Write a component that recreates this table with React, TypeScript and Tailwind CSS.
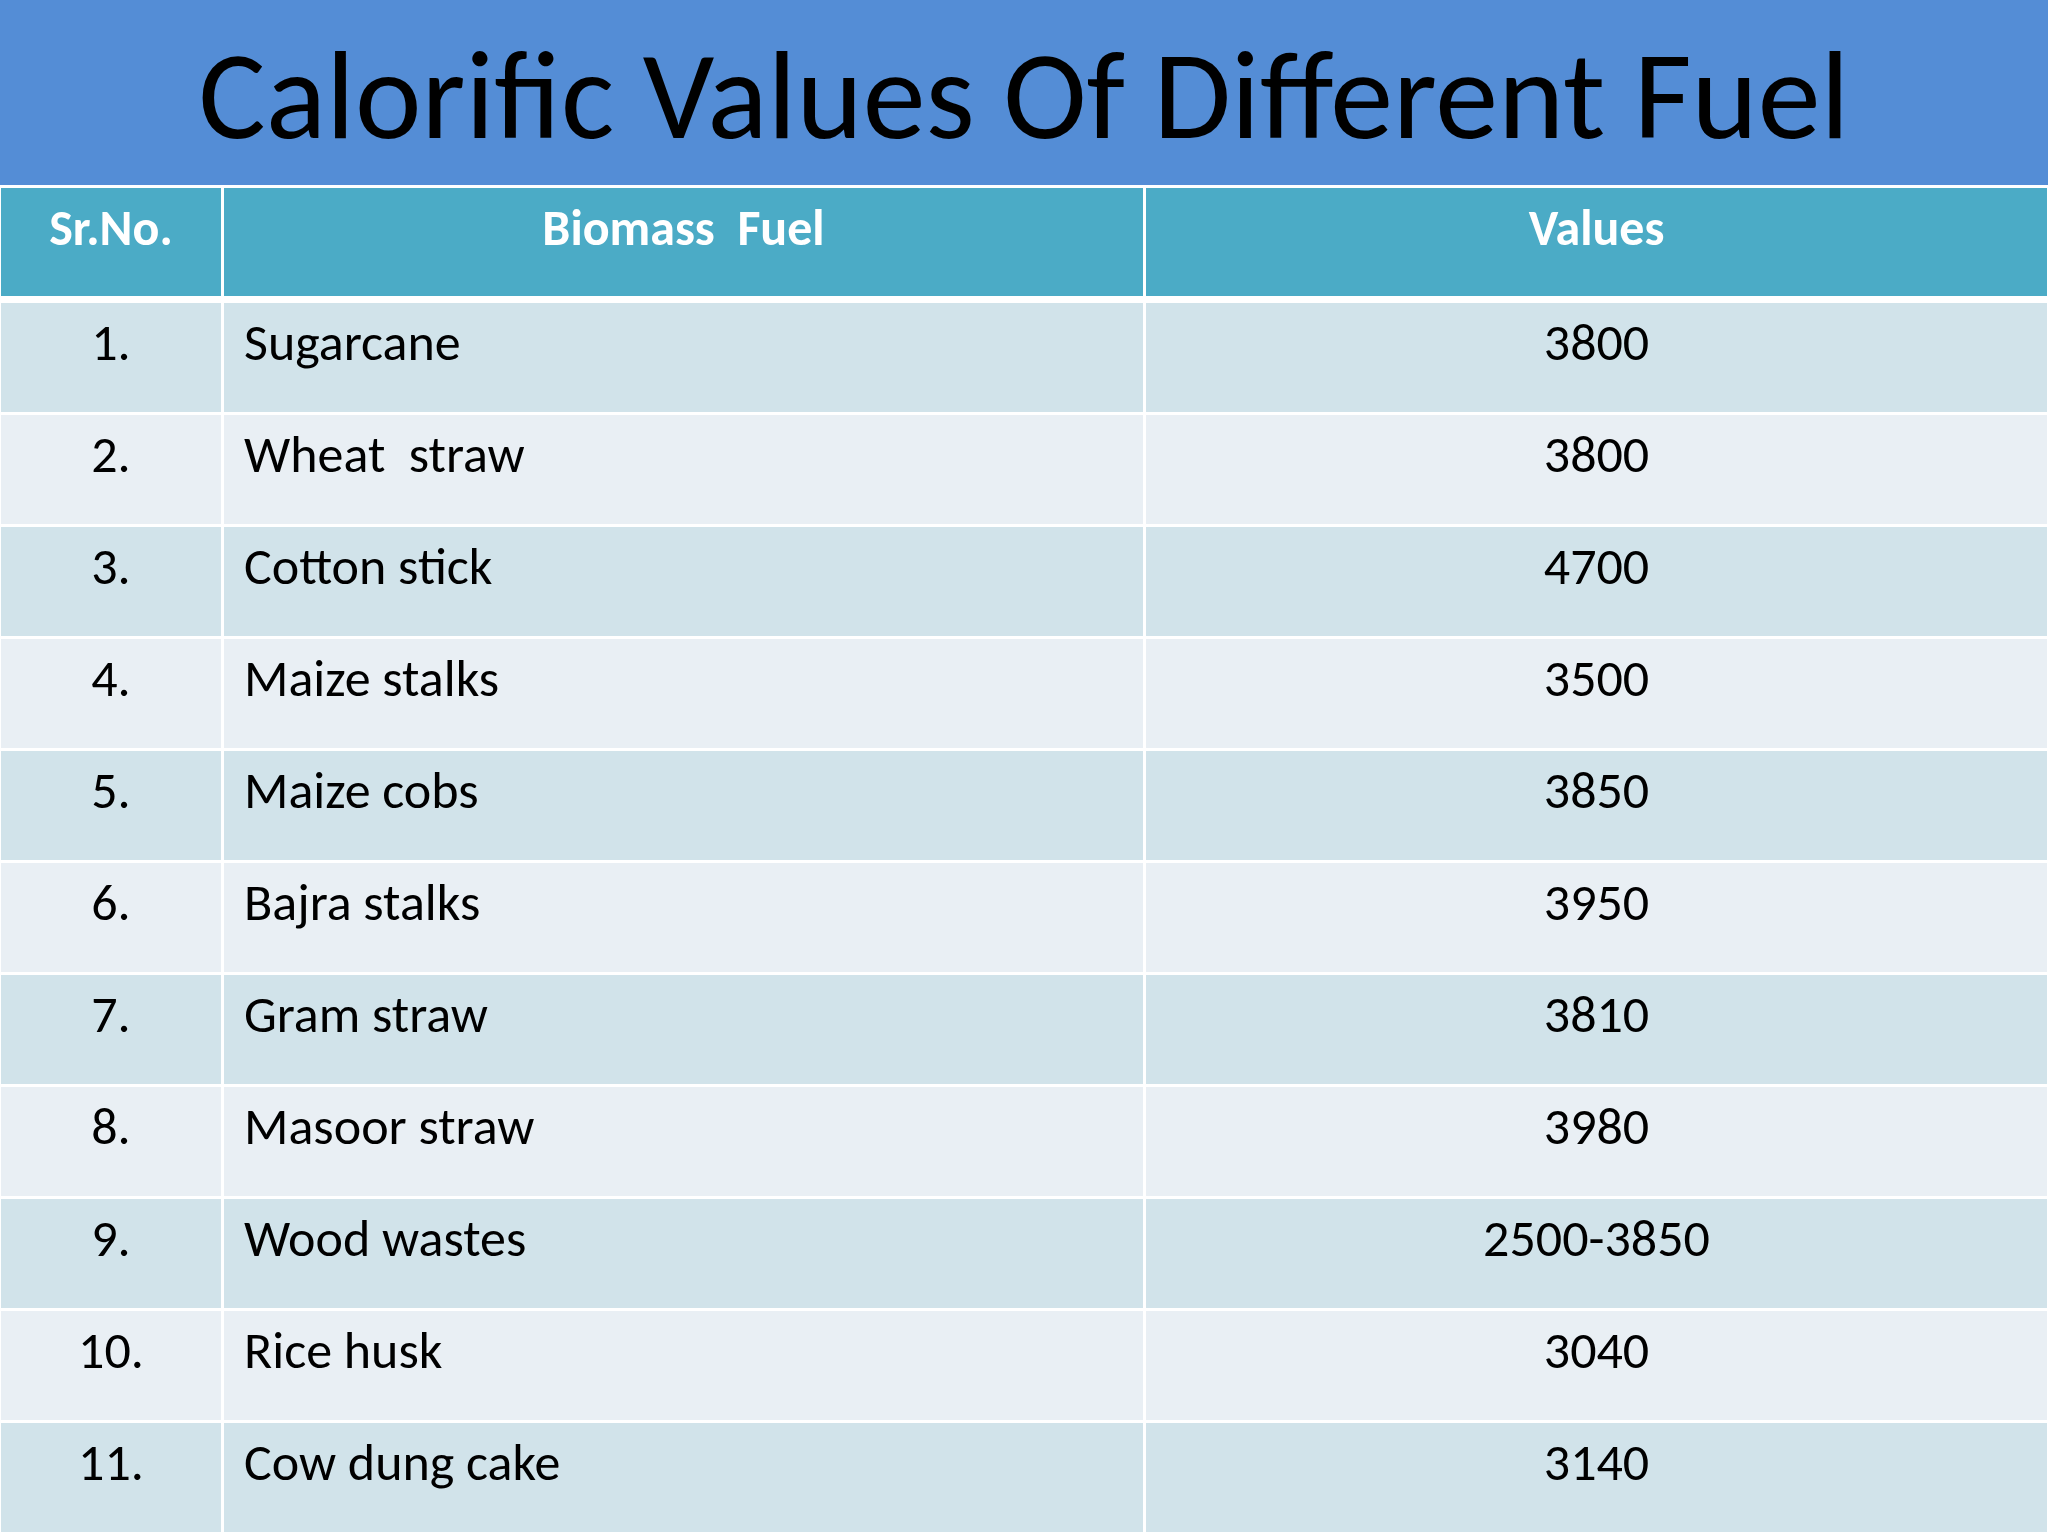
import React from "react";

const rows = [
  ["1.", "Sugarcane", "3800"],
  ["2.", "Wheat  straw", "3800"],
  ["3.", "Cotton stick", "4700"],
  ["4.", "Maize stalks", "3500"],
  ["5.", "Maize cobs", "3850"],
  ["6.", "Bajra stalks", "3950"],
  ["7.", "Gram straw", "3810"],
  ["8.", "Masoor straw", "3980"],
  ["9.", "Wood wastes", "2500-3850"],
  ["10.", "Rice husk", "3040"],
  ["11.", "Cow dung cake", "3140"],
];

export default function App() {
  return (
    <main
      className="w-[2048px] h-[1536px] bg-white overflow-hidden flex flex-col text-black"
      style={{ fontFamily: "Carlito, Calibri, Lato, 'Open Sans', sans-serif" }}
    >
      {/* Title */}
      <header className="h-[185px] shrink-0 bg-[#548dd6] flex justify-center pt-[32px]">
        <h1 className="text-[126px] leading-none font-normal whitespace-pre">
          Calorific Values Of Different Fuel
        </h1>
      </header>

      {/* Table */}
      <section className="mt-[3px] pl-[1px]">
        <div className="grid grid-cols-[220px_919px_901px] gap-x-[3px] mb-[7px]">
          <div className="h-[108px] bg-[#4babc6] text-white font-bold text-[50px] leading-[1.2] text-center pt-[10px]">
            Sr.No.
          </div>
          <div className="h-[108px] bg-[#4babc6] text-white font-bold text-[50px] leading-[1.2] text-center pt-[10px] whitespace-pre">
            Biomass  Fuel
          </div>
          <div className="h-[108px] bg-[#4babc6] text-white font-bold text-[50px] leading-[1.2] text-center pt-[10px]">
            Values
          </div>
        </div>

        <div className="grid grid-cols-[220px_919px_901px] gap-x-[3px] gap-y-[3px]">
          {rows.map(([no, fuel, value], i) => {
            const bg = i % 2 === 0 ? "bg-[#d1e3ea]" : "bg-[#e9eff4]";
            return (
              <React.Fragment key={no}>
                <div className={`h-[109px] ${bg} text-[52px] leading-[1.2] text-center pt-[8px]`}>
                  {no}
                </div>
                <div className={`h-[109px] ${bg} text-[52px] leading-[1.2] pl-[20px] pt-[8px] whitespace-pre`}>
                  {fuel}
                </div>
                <div className={`h-[109px] ${bg} text-[52px] leading-[1.2] text-center pt-[8px]`}>
                  {value}
                </div>
              </React.Fragment>
            );
          })}
        </div>
      </section>
    </main>
  );
}
